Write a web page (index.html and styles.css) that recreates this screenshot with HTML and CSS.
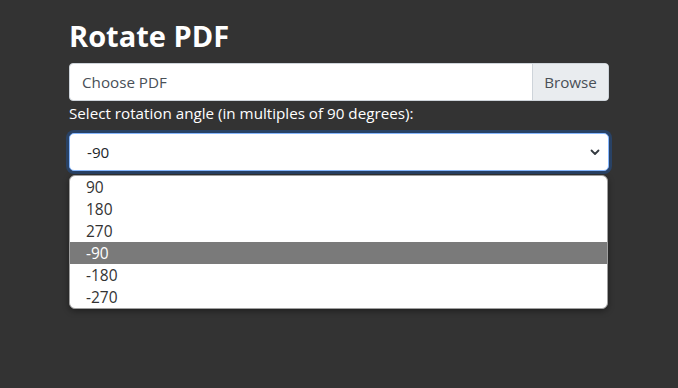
FILE: index.html
```html
<!DOCTYPE html>
<html>
<head>
<meta charset="utf-8">
<link rel="stylesheet" href="styles.css">
</head>
<body>
<div class="container">
  <h1 class="title">Rotate PDF</h1>
  <div class="file-input">
    <span class="file-label">Choose PDF</span>
    <span class="file-btn">Browse</span>
  </div>
  <label class="angle-label">Select rotation angle (in multiples of 90 degrees):</label>
  <div class="select-wrap">
    <div class="select">
      <span class="select-value">-90</span>
      <svg class="chevron" width="10" height="8" viewBox="0 0 10 8"><path d="M1.5 2.5 5 6 8.5 2.5" fill="none" stroke="#343a40" stroke-width="1.8" stroke-linecap="round" stroke-linejoin="round"/></svg>
    </div>
    <ul class="options">
      <li class="option">90</li>
      <li class="option">180</li>
      <li class="option">270</li>
      <li class="option selected">-90</li>
      <li class="option">-180</li>
      <li class="option">-270</li>
    </ul>
  </div>
</div>
</body>
</html>
```
FILE: styles.css
```css
html, body {
  margin: 0;
  padding: 0;
  background: #333333;
  height: 100%;
}
body {
  font-family: "Open Sans", "Noto Sans", sans-serif;
  font-size: 15.2px;
  color: #fff;
}
.container {
  width: 540px;
  margin: 0 auto;
  padding-top: 17px;
}
.title {
  margin: 0 0 8px;
  font-size: 29px;
  line-height: 38px;
  font-weight: 700;
  color: #fff;
}
.file-input {
  display: flex;
  height: 38px;
  box-sizing: border-box;
  background: #fff;
  border: 1px solid #ced4da;
  border-radius: 4px;
  overflow: hidden;
}
.file-label {
  flex: 1;
  padding: 0 12px;
  line-height: 36px;
  color: #495057;
}
.file-btn {
  width: 76px;
  box-sizing: border-box;
  text-align: center;
  line-height: 36px;
  background: #e9ecef;
  border-left: 1px solid #ced4da;
  color: #495057;
}
.angle-label {
  display: block;
  line-height: 24px;
  margin-bottom: 8px;
  color: #fff;
}
.select-wrap {
  position: relative;
}
.select {
  display: flex;
  align-items: center;
  justify-content: space-between;
  height: 38px;
  box-sizing: border-box;
  padding: 0 8px 0 17px;
  background: #fff;
  border: 1px solid #86b7fe;
  border-radius: 5px;
  box-shadow: 0 0 0 3px rgba(13, 110, 253, 0.25);
  color: #212529;
}
.chevron {
  display: block;
}
.options {
  position: absolute;
  left: 0;
  top: 42px;
  width: 539px;
  margin: 0;
  padding: 0;
  list-style: none;
  background: #fff;
  border: 1px solid #a0a0a0;
  box-sizing: border-box;
  border-radius: 6px;
  overflow: hidden;
  box-shadow: 0 2px 6px rgba(0, 0, 0, 0.4);
}
.option {
  height: 22px;
  line-height: 22px;
  padding-left: 16px;
  font-size: 15.5px;
  color: #333;
}
.option.selected {
  background: #7a7a7a;
  color: #fff;
}
```
